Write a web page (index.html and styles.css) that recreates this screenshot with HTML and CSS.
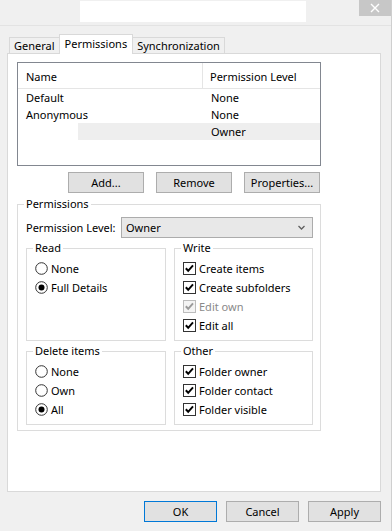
FILE: index.html
```html
<!DOCTYPE html>
<html lang="en">
<head>
    <meta charset="UTF-8">
    <meta name="viewport" content="width=device-width, initial-scale=1.0">
    <title>Folder Properties</title>
    <link rel="stylesheet" href="styles.css">
</head>
<body>

    <!-- Title bar -->
    <div class="titlebar">
        <div class="title-field"></div>
        <div class="close-btn">
            <svg width="10" height="10" viewBox="0 0 10 10"><path d="M1 1 L9 9 M9 1 L1 9" stroke="#fff" stroke-width="1.4"/></svg>
        </div>
    </div>

    <!-- Tabs -->
    <div class="tabs">
        <div class="tab">General</div>
        <div class="tab active">Permissions</div>
        <div class="tab">Synchronization</div>
    </div>

    <div class="panel">
        <div class="listbox">
            <div class="list-head">
                <div class="col-name">Name</div>
                <div class="col-level">Permission Level</div>
            </div>
            <div class="list-row"><span class="col-name">Default</span><span class="col-level">None</span></div>
            <div class="list-row"><span class="col-name">Anonymous</span><span class="col-level">None</span></div>
            <div class="list-row selected"><span class="col-name"></span><span class="col-level">Owner</span></div>
        </div>

        <div class="list-actions">
            <button class="btn">Add...</button>
            <button class="btn">Remove</button>
            <button class="btn">Properties...</button>
        </div>

        <fieldset class="group perms">
            <legend>Permissions</legend>
            <div class="level-row">
                <label>Permission Level:</label>
                <div class="select">
                    <span>Owner</span>
                    <svg class="chevron" width="7" height="5" viewBox="0 0 7 5"><path d="M0.5 1 L3.5 4 L6.5 1" stroke="#606060" stroke-width="1.3" fill="none"/></svg>
                </div>
            </div>

            <div class="group-grid">
                <fieldset class="group">
                    <legend>Read</legend>
                    <div class="opt">
                        <svg class="radio" width="13" height="13" viewBox="0 0 13 13"><circle cx="6.5" cy="6.5" r="5.8" fill="#fff" stroke="#333"/></svg>
                        None
                    </div>
                    <div class="opt">
                        <svg class="radio" width="13" height="13" viewBox="0 0 13 13"><circle cx="6.5" cy="6.5" r="5.8" fill="#fff" stroke="#333"/><circle cx="6.5" cy="6.5" r="3" fill="#000"/></svg>
                        Full Details
                    </div>
                </fieldset>

                <fieldset class="group">
                    <legend>Write</legend>
                    <div class="opt">
                        <svg class="check" width="13" height="13" viewBox="0 0 13 13"><rect x="0.5" y="0.5" width="12" height="12" fill="#fff" stroke="#333"/><path d="M2.8 6.3 L5.2 8.8 L10 3.4" stroke="#000" stroke-width="2" fill="none"/></svg>
                        Create items
                    </div>
                    <div class="opt">
                        <svg class="check" width="13" height="13" viewBox="0 0 13 13"><rect x="0.5" y="0.5" width="12" height="12" fill="#fff" stroke="#333"/><path d="M2.8 6.3 L5.2 8.8 L10 3.4" stroke="#000" stroke-width="2" fill="none"/></svg>
                        Create subfolders
                    </div>
                    <div class="opt disabled">
                        <svg class="check" width="13" height="13" viewBox="0 0 13 13"><rect x="0.5" y="0.5" width="12" height="12" fill="#f4f4f4" stroke="#bcbcbc"/><path d="M2.8 6.3 L5.2 8.8 L10 3.4" stroke="#9a9a9a" stroke-width="2" fill="none"/></svg>
                        Edit own
                    </div>
                    <div class="opt">
                        <svg class="check" width="13" height="13" viewBox="0 0 13 13"><rect x="0.5" y="0.5" width="12" height="12" fill="#fff" stroke="#333"/><path d="M2.8 6.3 L5.2 8.8 L10 3.4" stroke="#000" stroke-width="2" fill="none"/></svg>
                        Edit all
                    </div>
                </fieldset>

                <fieldset class="group">
                    <legend>Delete items</legend>
                    <div class="opt">
                        <svg class="radio" width="13" height="13" viewBox="0 0 13 13"><circle cx="6.5" cy="6.5" r="5.8" fill="#fff" stroke="#333"/></svg>
                        None
                    </div>
                    <div class="opt">
                        <svg class="radio" width="13" height="13" viewBox="0 0 13 13"><circle cx="6.5" cy="6.5" r="5.8" fill="#fff" stroke="#333"/></svg>
                        Own
                    </div>
                    <div class="opt">
                        <svg class="radio" width="13" height="13" viewBox="0 0 13 13"><circle cx="6.5" cy="6.5" r="5.8" fill="#fff" stroke="#333"/><circle cx="6.5" cy="6.5" r="3" fill="#000"/></svg>
                        All
                    </div>
                </fieldset>

                <fieldset class="group">
                    <legend>Other</legend>
                    <div class="opt">
                        <svg class="check" width="13" height="13" viewBox="0 0 13 13"><rect x="0.5" y="0.5" width="12" height="12" fill="#fff" stroke="#333"/><path d="M2.8 6.3 L5.2 8.8 L10 3.4" stroke="#000" stroke-width="2" fill="none"/></svg>
                        Folder owner
                    </div>
                    <div class="opt">
                        <svg class="check" width="13" height="13" viewBox="0 0 13 13"><rect x="0.5" y="0.5" width="12" height="12" fill="#fff" stroke="#333"/><path d="M2.8 6.3 L5.2 8.8 L10 3.4" stroke="#000" stroke-width="2" fill="none"/></svg>
                        Folder contact
                    </div>
                    <div class="opt">
                        <svg class="check" width="13" height="13" viewBox="0 0 13 13"><rect x="0.5" y="0.5" width="12" height="12" fill="#fff" stroke="#333"/><path d="M2.8 6.3 L5.2 8.8 L10 3.4" stroke="#000" stroke-width="2" fill="none"/></svg>
                        Folder visible
                    </div>
                </fieldset>
            </div>
        </fieldset>
    </div>

    <!-- Dialog buttons -->
    <div class="dialog-buttons">
        <button class="btn wide default">OK</button>
        <button class="btn wide">Cancel</button>
        <button class="btn wide">Apply</button>
    </div>

</body>
</html>
```

FILE: styles.css
```css
* {
    box-sizing: border-box;
}

body {
    margin: 0;
    width: 392px;
    height: 531px;
    overflow: hidden;
    background-color: #f0f0f0;
    border-right: 1px solid #cfcfcf;
    font-family: "Noto Sans", "Open Sans", sans-serif;
    font-size: 11px;
    color: #000;
}

/* Title bar */
.titlebar {
    height: 26px;
    display: flex;
    align-items: flex-start;
    border-bottom: 1px solid #e3e3e3;
}

.title-field {
    width: 226px;
    height: 21px;
    margin: 1px 0 0 80px;
    background: #fff;
}

.close-btn {
    margin-left: auto;
    width: 32px;
    height: 16px;
    background: #c7c7c7;
    display: flex;
    align-items: center;
    justify-content: center;
}

/* Tabs */
.tabs {
    display: flex;
    align-items: flex-end;
    margin: 8px 0 0 9px;
}

.tab {
    height: 16px;
    line-height: 15px;
    padding: 0 4px;
    border: 1px solid #d9d9d9;
    border-bottom: none;
    background: #f0f0f0;
    white-space: nowrap;
}

.tab + .tab {
    margin-left: -1px;
}

.tab.active {
    height: 20px;
    line-height: 18px;
    padding: 0 5px;
    background: #fff;
    margin-bottom: -1px;
    position: relative;
    z-index: 1;
}

.panel {
    margin-left: 7px;
    width: 374px;
    height: 439px;
    background: #fff;
    border: 1px solid #d9d9d9;
    padding: 8px 0 0 9px;
}

/* List of users */
.listbox {
    width: 304px;
    height: 104px;
    border: 1px solid #828790;
}

.list-head {
    display: flex;
    height: 26px;
    border-bottom: 1px solid #e5e5e5;
}

.list-head > div {
    line-height: 27px;
}

.list-head .col-name {
    border-right: 1px solid #e5e5e5;
}

.col-name {
    width: 185px;
    padding-left: 8px;
}

.col-level {
    padding-left: 7px;
}

.list-row {
    display: flex;
    height: 17px;
    line-height: 17px;
}

.list-row.selected {
    background: linear-gradient(to right, transparent 60px, #eeeeee 60px);
}

.list-row .col-level {
    padding-left: 8px;
}

.list-actions {
    display: flex;
    justify-content: flex-end;
    gap: 12px;
    width: 303px;
    margin-top: 6px;
}

.btn {
    width: 76px;
    height: 21px;
    padding: 0;
    font: inherit;
    color: #000;
    background: #e1e1e1;
    border: 1px solid #adadad;
}

.btn.wide {
    width: 73px;
}

.btn.default {
    border-color: #0078d7;
}

/* Group boxes */
.group {
    margin: 0;
    border: 1px solid #dcdcdc;
    padding: 3px 4px 5px 8px;
    min-width: 0;
}

.group legend {
    padding: 0 2px;
    margin-left: -2px;
    line-height: 16px;
}

.perms {
    width: 304px;
    margin-top: 3px;
    padding: 0 7px 5px 8px;
}

.level-row {
    display: flex;
    align-items: center;
    margin-top: 5px;
}

.level-row label {
    width: 95px;
}

.select {
    width: 192px;
    height: 21px;
    display: flex;
    align-items: center;
    padding-left: 4px;
    background: #e8e8e8;
    border: 1px solid #acacac;
}

.chevron {
    margin-left: auto;
    margin-right: 7px;
}

.group-grid {
    display: grid;
    grid-template-columns: 140px 139px;
    column-gap: 8px;
    row-gap: 2px;
    margin-top: 2px;
}

.opt {
    display: flex;
    align-items: center;
    gap: 3px;
    height: 19px;
    white-space: nowrap;
}

.opt svg {
    flex-shrink: 0;
}

.opt.disabled {
    color: #8a8a8a;
}

/* Bottom buttons */
.dialog-buttons {
    display: flex;
    justify-content: flex-end;
    gap: 9px;
    margin-top: 9px;
    padding-right: 10px;
}
```
